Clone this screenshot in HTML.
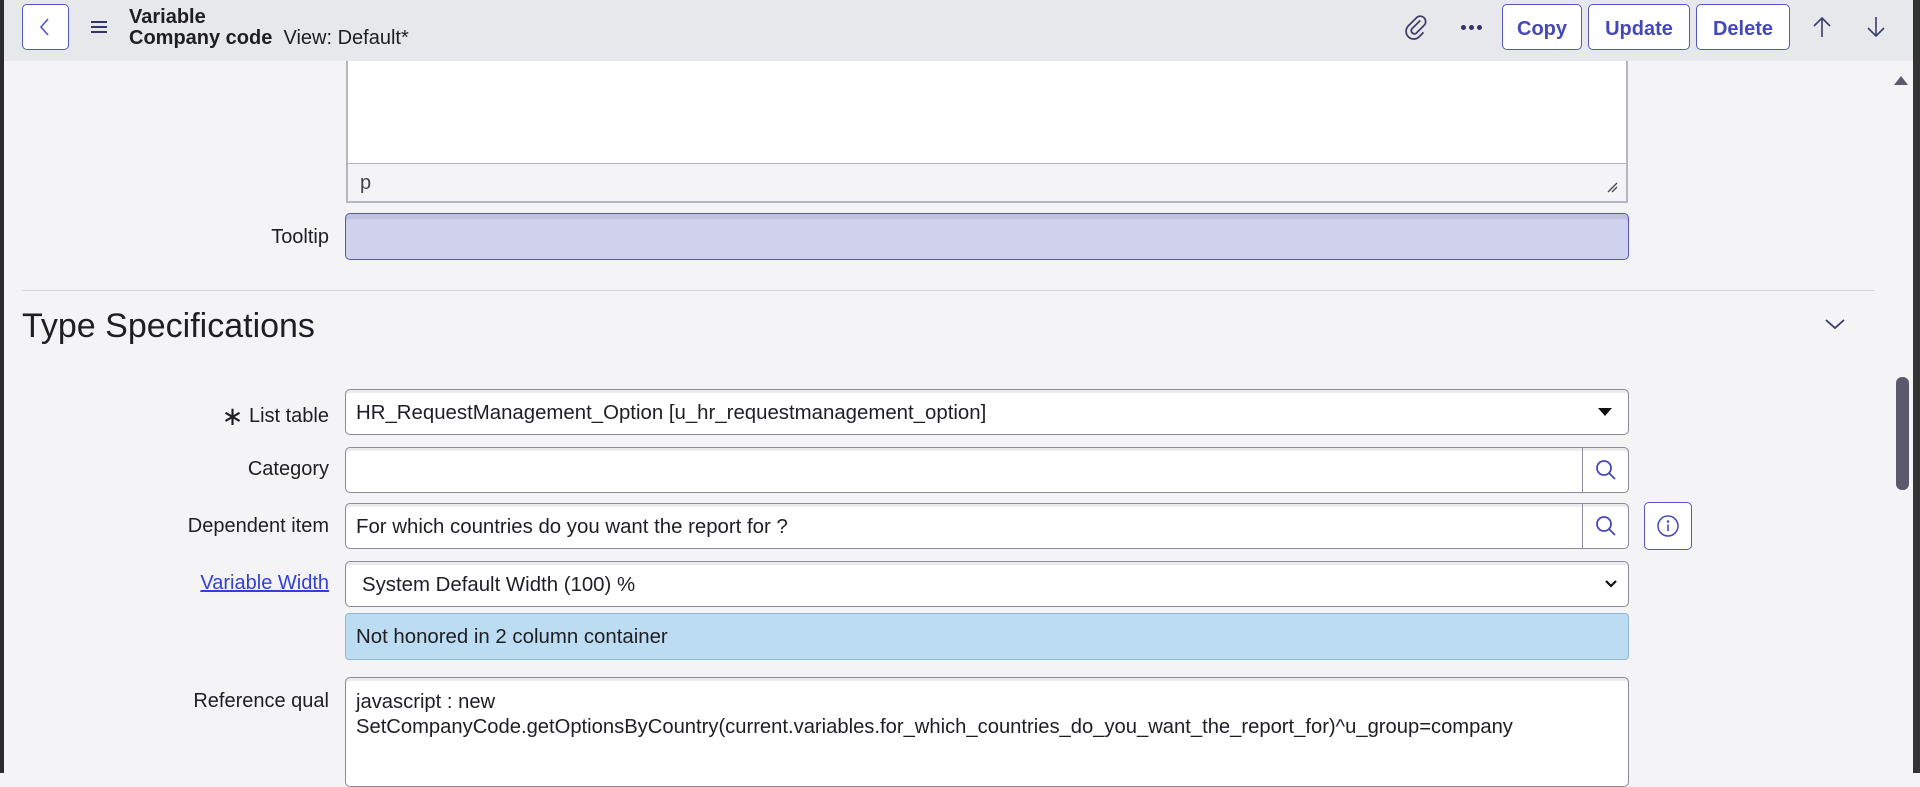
<!DOCTYPE html>
<html><head><meta charset="utf-8"><style>
*{box-sizing:border-box;margin:0;padding:0}
body{width:1920px;height:773px;overflow:hidden;background:#f4f4f6;font-family:"Liberation Sans",sans-serif;color:#1e1e24;position:relative}
.a{position:absolute}
.hdr{left:0;top:0;width:1920px;height:61px;background:#e7e8ec}
.btn{position:absolute;top:4px;height:46px;border:1.5px solid #5356c4;border-radius:5px;background:#fff;color:#4548b8;font-weight:bold;font-size:20px;text-align:center;line-height:48px}
.lbl{position:absolute;right:1591px;font-size:20px;color:#1e1e24;text-align:right;white-space:nowrap}
.fld{position:absolute;left:345px;width:1284px;border:1.5px solid #8a8c98;border-radius:5px;background:#fff;font-size:20.4px;padding-left:10px;box-shadow:inset 0 3px 0 #ececef}
.sb{position:absolute;right:0;top:0;width:46px;height:100%;border-left:1.5px solid #8a8c98;display:flex;align-items:center;justify-content:center}
</style></head><body>
<div class="a hdr"></div>
<div class="a" style="left:0;top:0;width:4px;height:773px;background:#2c2c2e"></div>
<div class="a" style="left:1913px;top:0;width:7px;height:773px;background:#333"></div>
<div class="a" style="left:22px;top:4px;width:47px;height:46px;border:1.5px solid #5356c4;border-radius:5px;background:#fff"></div>
<svg class="a" style="left:38px;top:16px" width="14" height="22"><path d="M10 3 L3 11 L10 19" stroke="#5356c4" stroke-width="1.6" fill="none"/></svg>
<svg class="a" style="left:91px;top:20px" width="16" height="14"><path d="M0 2h16M0 7h16M0 12h16" stroke="#33356a" stroke-width="2"/></svg>
<div class="a" style="left:129px;top:6px;font-size:20px;font-weight:bold">Variable</div>
<div class="a" style="left:129px;top:27px;font-size:20px;white-space:nowrap"><b>Company code</b>&nbsp;&nbsp;View: Default*</div>
<svg class="a" style="left:1404px;top:14px" width="26" height="26" viewBox="0 0 24 24"><path d="M15 6 L7 14 a3 3 0 0 0 4 4 L19 10 a5 5 0 0 0 -7 -7 L4 11 a7 7 0 0 0 10 10 L18 17" stroke="#3a3c68" stroke-width="1.6" fill="none"/></svg>
<div class="a" style="left:1461px;top:25px;font-size:0"><span style="display:inline-block;width:5px;height:5px;border-radius:50%;background:#33356a;margin-right:3px"></span><span style="display:inline-block;width:5px;height:5px;border-radius:50%;background:#33356a;margin-right:3px"></span><span style="display:inline-block;width:5px;height:5px;border-radius:50%;background:#33356a"></span></div>
<div class="btn" style="left:1502px;width:80px">Copy</div>
<div class="btn" style="left:1588px;width:102px">Update</div>
<div class="btn" style="left:1696px;width:94px">Delete</div>
<svg class="a" style="left:1811px;top:15px" width="22" height="24"><path d="M11 22V3M3 11L11 3L19 11" stroke="#3a3c68" stroke-width="1.6" fill="none"/></svg>
<svg class="a" style="left:1865px;top:15px" width="22" height="24"><path d="M11 2V21M3 13L11 21L19 13" stroke="#3a3c68" stroke-width="1.6" fill="none"/></svg>
<svg class="a" style="left:1893px;top:74px" width="16" height="12"><path d="M1 11L8 2L15 11Z" fill="#5b5a6a"/></svg>
<div class="a" style="left:1896px;top:377px;width:13px;height:113px;border-radius:6px;background:#5b5a6a"></div>

<div class="a" style="left:346px;top:61px;width:1282px;height:142px;border:2px solid #b4b6c0;border-top:none;background:#fff"></div>
<div class="a" style="left:348px;top:163px;width:1278px;height:38px;background:#f4f4f6;border-top:1px solid #b0b2c8"></div>
<div class="a" style="left:360px;top:172px;font-size:20px;color:#444">p</div>
<svg class="a" style="left:1606px;top:181px" width="12" height="12"><path d="M2 11L11 2M6 11L11 6" stroke="#444" stroke-width="1.3"/></svg>

<div class="lbl" style="top:226px">Tooltip</div>
<div class="a" style="left:345px;top:213px;width:1284px;height:47px;border:1.5px solid #5356c4;border-radius:5px;background:#d0d1ec;box-shadow:inset 0 5px 0 #bfc1de"></div>
<div class="a" style="left:22px;top:290px;width:1853px;height:1px;background:#d4d4d8"></div>
<div class="a" style="left:22px;top:307px;font-size:34px;color:#1e1e24">Type Specifications</div>
<svg class="a" style="left:1824px;top:317px" width="22" height="14"><path d="M2 3L11 11L20 3" stroke="#3a3c68" stroke-width="1.8" fill="none"/></svg>

<div class="lbl" style="top:401px"><span style="font-size:26px;font-weight:100;vertical-align:-3px">&#x2217;</span> List table</div>
<div class="fld" style="top:389px;height:46px;line-height:46px">HR_RequestManagement_Option [u_hr_requestmanagement_option]<svg class="a" style="right:16px;top:18px" width="14" height="8"><path d="M0 0H14L7 8Z" fill="#111"/></svg></div>

<div class="lbl" style="top:458px">Category</div>
<div class="fld" style="top:447px;height:46px"><div class="sb"><svg width="24" height="24"><circle cx="10" cy="10" r="7" stroke="#4548b8" stroke-width="1.8" fill="none"/><path d="M15 15L21 21" stroke="#4548b8" stroke-width="1.8"/></svg></div></div>

<div class="lbl" style="top:515px">Dependent item</div>
<div class="fld" style="top:503px;height:46px;line-height:46px">For which countries do you want the report for ?<div class="sb"><svg width="24" height="24"><circle cx="10" cy="10" r="7" stroke="#4548b8" stroke-width="1.8" fill="none"/><path d="M15 15L21 21" stroke="#4548b8" stroke-width="1.8"/></svg></div></div>
<div class="a" style="left:1644px;top:502px;width:48px;height:48px;border:1.5px solid #5356c4;border-radius:5px;background:#fff;display:flex;align-items:center;justify-content:center"><svg width="24" height="24"><circle cx="12" cy="12" r="10" stroke="#4548b8" stroke-width="1.5" fill="none"/><circle cx="12" cy="7.5" r="1.3" fill="#4548b8"/><path d="M12 10.5V17" stroke="#4548b8" stroke-width="1.6"/></svg></div>

<div class="lbl" style="top:572px;color:#3340d8;text-decoration:underline">Variable Width</div>
<div class="fld" style="top:561px;height:46px;line-height:46px;padding-left:16px">System Default Width (100) %<svg class="a" style="right:10px;top:17px" width="14" height="10"><path d="M2 2L7 7L12 2" stroke="#111" stroke-width="2.2" fill="none"/></svg></div>

<div class="a" style="left:345px;top:613px;width:1284px;height:47px;border:1.5px solid #8fb8d8;border-radius:4px;background:#bcdcf1;font-size:20.4px;line-height:46px;padding-left:10px">Not honored in 2 column container</div>

<div class="lbl" style="top:690px">Reference qual</div>
<div class="fld" style="top:677px;height:110px;padding-top:12px;line-height:25px;font-size:20.2px">javascript : new<br>SetCompanyCode.getOptionsByCountry(current.variables.for_which_countries_do_you_want_the_report_for)^u_group=company</div>
</body></html>
